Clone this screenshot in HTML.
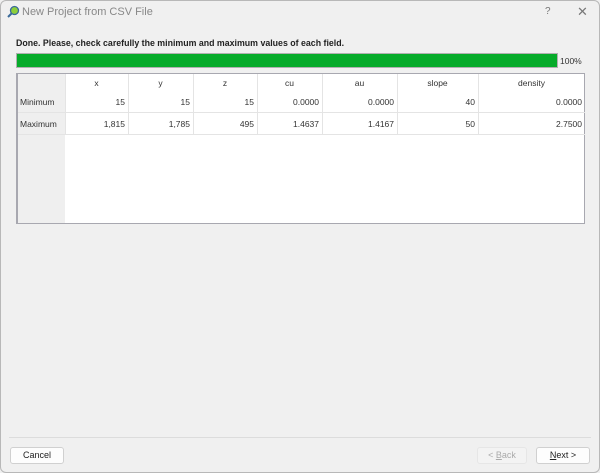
<!DOCTYPE html>
<html><head><style>
*{box-sizing:border-box;margin:0;padding:0}
body{width:600px;height:473px;background:#f0f0f0;font-family:"Liberation Sans",sans-serif;font-size:9px;color:#333;position:relative;overflow:hidden}
.win{position:absolute;left:0;top:0;width:600px;height:473px;border:1px solid #b8b8b8;border-radius:6px;background:#f0f0f0}
.title{position:absolute;left:22px;top:6px;font-size:11px;color:#888}
.abs{position:absolute}
.hd{left:16px;top:38px;font-size:8.8px;font-weight:bold;color:#222}
.bar{left:16px;top:53px;width:542px;height:15px;background:#06ab2a;border:1px solid #b0b0b0}
.pct{left:560px;top:56px;font-size:8.5px}
.tbl{left:16px;top:73px;width:569px;height:151px;background:#fff;border:1px solid #a8a8b0;border-left:2px solid #a8a8b0}
.rh{position:absolute;left:0;top:0;width:47px;height:149px;background:#efefef}
.c{position:absolute;font-size:8.5px}
.vl{position:absolute;width:1px;background:#e4e4e4;top:0;height:60px}
.hl{position:absolute;height:1px;background:#e4e4e4;left:0;width:567px}
.btn{position:absolute;top:447px;height:17px;background:#fdfdfd;border:1px solid #d0d0d0;border-radius:3px;font-size:9px;text-align:center;line-height:15px;color:#222}
</style></head><body>
<div class="win"></div>
<svg class="abs" style="left:7px;top:5px" width="13" height="13" viewBox="0 0 13 13"><circle cx="7.5" cy="5.5" r="4" fill="#8ccf3a" stroke="#3a6a9a" stroke-width="1.3"/><line x1="4.5" y1="8.5" x2="1" y2="12" stroke="#3a6a9a" stroke-width="2"/></svg>
<div class="title abs">New Project from CSV File</div>
<div class="abs" style="left:545px;top:6px;font-size:10px;color:#777">?</div>
<div class="abs" style="left:577px;top:4px;font-size:13px;color:#777">✕</div>
<div class="abs hd">Done. Please, check carefully the minimum and maximum values of each field.</div>
<div class="abs bar"></div>
<div class="abs pct">100%</div>
<div class="abs tbl">
<div class="rh"></div>
<div class="hl" style="top:38px"></div>
<div class="hl" style="top:60px"></div>
<div class="vl" style="left:47px"></div>
<div class="vl" style="left:110px"></div>
<div class="vl" style="left:175px"></div>
<div class="vl" style="left:239px"></div>
<div class="vl" style="left:304px"></div>
<div class="vl" style="left:379px"></div>
<div class="vl" style="left:460px"></div>
<div class="c" style="left:0;top:23px;padding-left:2px">Minimum</div>
<div class="c" style="left:0;top:45px;padding-left:2px">Maximum</div>
<div class="c" style="left:47px;width:63px;top:4px;text-align:center">x</div>
<div class="c" style="left:110px;width:65px;top:4px;text-align:center">y</div>
<div class="c" style="left:175px;width:64px;top:4px;text-align:center">z</div>
<div class="c" style="left:239px;width:65px;top:4px;text-align:center">cu</div>
<div class="c" style="left:304px;width:75px;top:4px;text-align:center">au</div>
<div class="c" style="left:379px;width:81px;top:4px;text-align:center">slope</div>
<div class="c" style="left:460px;width:107px;top:4px;text-align:center">density</div>
<div class="c" style="left:47px;width:60px;top:23px;text-align:right">15</div>
<div class="c" style="left:110px;width:62px;top:23px;text-align:right">15</div>
<div class="c" style="left:175px;width:61px;top:23px;text-align:right">15</div>
<div class="c" style="left:239px;width:62px;top:23px;text-align:right">0.0000</div>
<div class="c" style="left:304px;width:72px;top:23px;text-align:right">0.0000</div>
<div class="c" style="left:379px;width:78px;top:23px;text-align:right">40</div>
<div class="c" style="left:460px;width:104px;top:23px;text-align:right">0.0000</div>
<div class="c" style="left:47px;width:60px;top:45px;text-align:right">1,815</div>
<div class="c" style="left:110px;width:62px;top:45px;text-align:right">1,785</div>
<div class="c" style="left:175px;width:61px;top:45px;text-align:right">495</div>
<div class="c" style="left:239px;width:62px;top:45px;text-align:right">1.4637</div>
<div class="c" style="left:304px;width:72px;top:45px;text-align:right">1.4167</div>
<div class="c" style="left:379px;width:78px;top:45px;text-align:right">50</div>
<div class="c" style="left:460px;width:104px;top:45px;text-align:right">2.7500</div>
</div>
<div class="abs" style="left:9px;top:437px;width:582px;height:1px;background:#dcdcdc"></div>
<div class="btn" style="left:10px;width:54px">Cancel</div>
<div class="btn" style="left:477px;width:50px;background:#f3f3f3;border-color:#e6e6e6;color:#aaa">&lt; <u>B</u>ack</div>
<div class="btn" style="left:536px;width:54px"><u>N</u>ext &gt;</div>
</body></html>
